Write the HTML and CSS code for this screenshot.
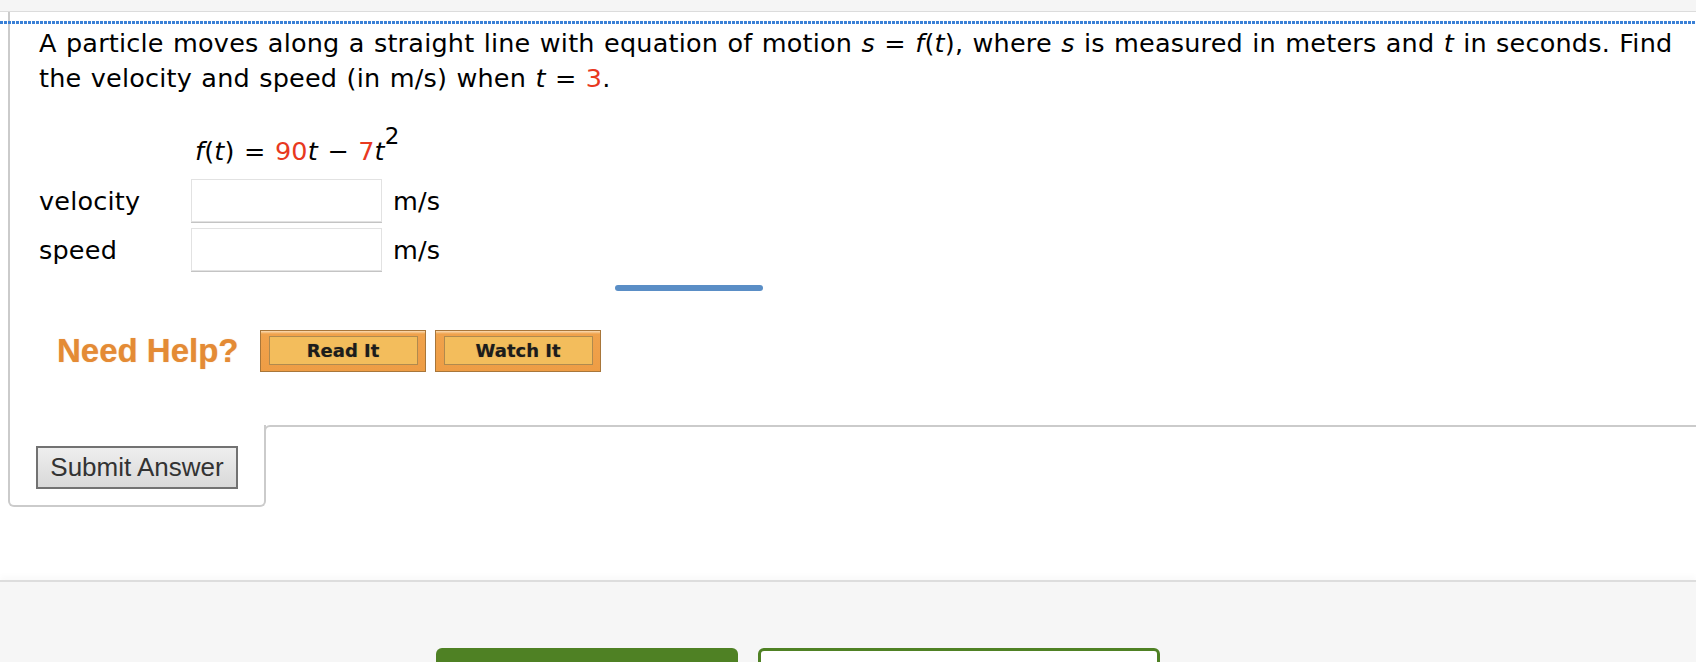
FILE: index.html
```html
<!DOCTYPE html>
<html>
<head>
<meta charset="utf-8">
<link rel="stylesheet" href="styles.css">
</head>
<body>
<div class="topbar"></div>
<div class="question">
  <div class="dots"></div>
  <p class="prompt">A particle moves along a straight line with equation of motion <i>s</i> = <i>f</i>(<i>t</i>), where <i>s</i> is measured in meters and <i>t</i> in seconds. Find the velocity and speed (in m/s) when <i>t</i> = <span class="red">3</span>.</p>
  <div class="formula"><i>f</i>(<i>t</i>) = <span class="red">90</span><i>t</i> − <span class="red">7</span><i>t</i><sup class="sq">2</sup></div>
  <div class="answers">
    <span class="label">velocity</span>
    <input class="field" type="text">
    <span class="unit">m/s</span>
    <span class="label">speed</span>
    <input class="field" type="text">
    <span class="unit">m/s</span>
  </div>
  <div class="bar"></div>
  <div class="help">
    <span class="need">Need Help?</span>
    <span class="hbtn"><span class="hbtn-in">Read It</span></span>
    <span class="hbtn"><span class="hbtn-in">Watch It</span></span>
  </div>
</div>
<div class="footer">
  <div class="submit-cell"><button class="submit" type="button">Submit Answer</button></div>
  <div class="tabline"></div>
</div>
<div class="bottom">
  <div class="gbtn solid"></div>
  <div class="gbtn outline"></div>
</div>
</body>
</html>
```
FILE: styles.css
```css
html, body {
  margin: 0;
  padding: 0;
  background: #ffffff;
  overflow: hidden;
}
body {
  font-family: "DejaVu Sans", Verdana, sans-serif;
  color: #000;
}
.topbar {
  height: 11px;
  background: #f5f5f5;
  border-bottom: 1px solid #dcdcdc;
}
.question {
  margin-left: 8px;
  border-left: 2px solid #cbcbcb;
  padding: 9px 0 0 29px;
  height: 413px;
  box-sizing: border-box;
}
.dots {
  margin-left: -39px;
  height: 3px;
  background: repeating-linear-gradient(90deg, #3a80d6 0, #3a80d6 3px, transparent 3px, transparent 4px);
}
.prompt, .formula, .answers {
  font-size: 25.5px;
  line-height: 35px;
  letter-spacing: 0.2px;
  word-spacing: 1px;
}
.prompt {
  margin: 2px 0 0 0;
}
.red { color: #e8391f; }
.formula {
  margin-top: 38px;
  padding-left: 156px;
}
.sq {
  font-size: 23px;
  line-height: 0;
  vertical-align: 16px;
}
.answers {
  margin-top: 10px;
  display: grid;
  grid-template-columns: 152px 191px auto;
  grid-auto-rows: 43px;
  row-gap: 6px;
  align-items: center;
}
.label, .unit { padding-top: 2px; }
.unit { padding-left: 11px; }
.field {
  box-sizing: border-box;
  width: 191px;
  height: 43px;
  margin: 0;
  border: 1px solid #e2e2e2;
  box-shadow: 0 1px 0 #c4c4c4;
  background: #fff;
}
.bar {
  margin: 14px 0 0 576px;
  width: 148px;
  height: 6px;
  border-radius: 3px;
  background: #5a8ec6;
}
.help {
  margin-top: 39px;
  padding-left: 18px;
  display: flex;
  align-items: center;
}
.need {
  font-family: "Liberation Sans", Arial, sans-serif;
  font-weight: bold;
  font-size: 33px;
  color: #e48b35;
  text-shadow: 0 0 1px rgba(228, 139, 53, 0.6);
  margin-right: 21px;
}
.hbtn {
  box-sizing: border-box;
  width: 166px;
  height: 42px;
  margin-right: 9px;
  border: 1px solid #a8763a;
  background: linear-gradient(#fadcb4 0, #f0a24c 3px, #ee9d45 100%);
  padding: 5px 7px 6px 8px;
  display: flex;
}
.hbtn-in {
  flex: 1;
  border: 1px solid #b08a4e;
  background: #f3bd5c;
  display: flex;
  align-items: center;
  justify-content: center;
  font-family: "DejaVu Sans", Verdana, sans-serif;
  font-weight: bold;
  font-size: 18px;
  color: #1c1c1c;
  text-shadow: 0 0 1px rgba(0, 0, 0, 0.35);
}
.footer {
  margin-left: 8px;
  display: flex;
  align-items: flex-start;
}
.submit-cell {
  box-sizing: border-box;
  width: 258px;
  height: 82px;
  border-left: 2px solid #cbcbcb;
  border-right: 2px solid #cbcbcb;
  border-bottom: 2px solid #cbcbcb;
  border-radius: 0 0 6px 6px;
  padding: 21px 0 0 26px;
}
.tabline {
  flex: 1;
  margin-left: -2px;
  height: 12px;
  border-top: 2px solid #cbcbcb;
  border-left: 2px solid #cbcbcb;
  border-top-left-radius: 6px;
}
.submit {
  box-sizing: border-box;
  width: 202px;
  height: 43px;
  margin: 0;
  padding: 0;
  border: 2px solid #727272;
  background: linear-gradient(#eeeeee, #d9d9d9);
  font-family: "Liberation Sans", Arial, sans-serif;
  font-size: 26px;
  color: #333;
}
.bottom {
  margin-top: 73px;
  height: 120px;
  border-top: 2px solid #dddddd;
  background: #f6f6f6;
  box-shadow: 0 -4px 6px rgba(0, 0, 0, 0.025);
  padding: 66px 0 0 436px;
  display: flex;
  gap: 20px;
}
.gbtn {
  height: 50px;
  border-radius: 6px;
  box-sizing: border-box;
}
.solid {
  width: 302px;
  background: #4f8124;
}
.outline {
  width: 402px;
  border: 3px solid #4f8124;
  background: #fff;
}
```
